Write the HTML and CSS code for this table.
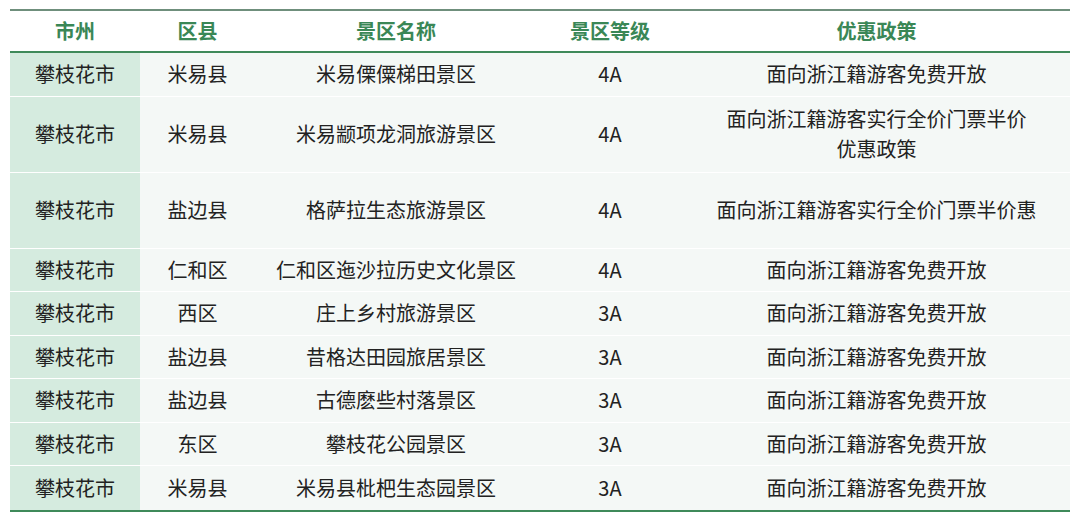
FILE: index.html
```html
<!DOCTYPE html>
<html lang="zh-CN">
<head>
<meta charset="utf-8">
<link rel="stylesheet" href="styles.css">
</head>
<body>
<table class="tbl">
  <colgroup>
    <col class="c1"><col class="c2"><col class="c3"><col class="c4"><col class="c5">
  </colgroup>
  <thead>
    <tr><th>市州</th><th>区县</th><th>景区名称</th><th>景区等级</th><th>优惠政策</th></tr>
  </thead>
  <tbody>
    <tr><td>攀枝花市</td><td>米易县</td><td>米易傈僳梯田景区</td><td>4A</td><td>面向浙江籍游客免费开放</td></tr>
    <tr class="tall"><td>攀枝花市</td><td>米易县</td><td>米易颛项龙洞旅游景区</td><td>4A</td><td>面向浙江籍游客实行全价门票半价<br>优惠政策</td></tr>
    <tr class="tall"><td>攀枝花市</td><td>盐边县</td><td>格萨拉生态旅游景区</td><td>4A</td><td>面向浙江籍游客实行全价门票半价惠</td></tr>
    <tr><td>攀枝花市</td><td>仁和区</td><td>仁和区迤沙拉历史文化景区</td><td>4A</td><td>面向浙江籍游客免费开放</td></tr>
    <tr><td>攀枝花市</td><td>西区</td><td>庄上乡村旅游景区</td><td>3A</td><td>面向浙江籍游客免费开放</td></tr>
    <tr><td>攀枝花市</td><td>盐边县</td><td>昔格达田园旅居景区</td><td>3A</td><td>面向浙江籍游客免费开放</td></tr>
    <tr><td>攀枝花市</td><td>盐边县</td><td>古德麽些村落景区</td><td>3A</td><td>面向浙江籍游客免费开放</td></tr>
    <tr><td>攀枝花市</td><td>东区</td><td>攀枝花公园景区</td><td>3A</td><td>面向浙江籍游客免费开放</td></tr>
    <tr class="last"><td>攀枝花市</td><td>米易县</td><td>米易县枇杷生态园景区</td><td>3A</td><td>面向浙江籍游客免费开放</td></tr>
  </tbody>
</table>
</body>
</html>
```

FILE: styles.css
```css
html, body {
  margin: 0;
  padding: 0;
  background: #ffffff;
}
body {
  padding: 9px 10px 0 10px;
  font-family: "Noto Sans CJK SC", "Noto Sans", sans-serif;
  color: #222222;
}
.tbl {
  width: 1060px;
  table-layout: fixed;
  border-collapse: collapse;
  border-top: 2px solid #6f8f7c;
  border-bottom: 2px solid #3f8a5a;
}
.c1 { width: 130px; }
.c2 { width: 115px; }
.c3 { width: 282px; }
.c4 { width: 146px; }
.c5 { width: 387px; }
.tbl th {
  height: 40px;
  padding: 0;
  font-size: 20px;
  font-weight: 700;
  color: #3a8756;
  text-align: center;
  vertical-align: middle;
  border-bottom: 2px solid #3f8a5a;
  line-height: 40px;
  background: #ffffff;
}
.tbl td {
  height: 42.5px;
  padding: 0;
  font-size: 20px;
  line-height: 30px;
  text-align: center;
  vertical-align: middle;
  background: #f4f8f6;
  border-bottom: 1px solid #ffffff;
}
.tbl td:first-child {
  background: #d5ebdf;
}
.tbl tr.tall td {
  height: 75px;
}
.tbl tr.last td {
  border-bottom: none;
  height: 43.5px;
}
```
